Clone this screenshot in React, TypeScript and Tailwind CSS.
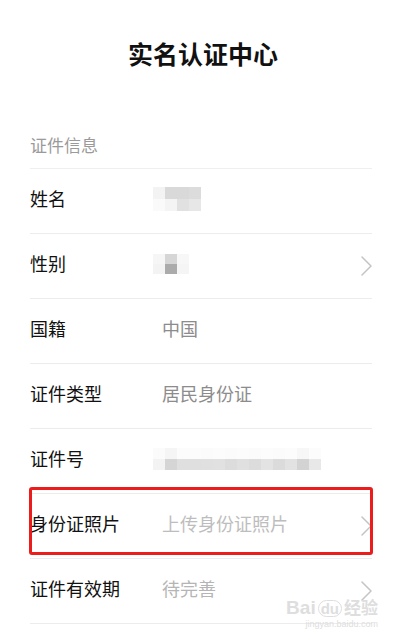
const font = { fontFamily: '"Noto Sans CJK SC", "Noto Sans", sans-serif' };

const Chevron = () => (
  <svg width="11" height="20" viewBox="0 0 11 20" fill="none" className="shrink-0">
    <path d="M1 1l9 9-9 9" stroke="#c4c4c4" strokeWidth="1.5" strokeLinecap="round" strokeLinejoin="round" />
  </svg>
);

// pixelated (mosaic) blocks standing in for the redacted values
const Mosaic = ({ rows, cell }: { rows: string[][]; cell: string }) => (
  <div className="flex flex-col -ml-[9px]">
    {rows.map((r, i) => (
      <div key={i} className="flex">
        {r.map((c, j) => (
          <div key={j} className={cell} style={{ backgroundColor: c }} />
        ))}
      </div>
    ))}
  </div>
);

const nameBlur = [
  ['#f3f3f3', '#d9d9d9', '#d9d9d9', '#dcdcdc'],
  ['#fafafa', '#f4f4f4', '#e1e1e1', '#e7e7e7'],
];
const sexBlur = [
  ['#f6f6f6', '#d6d6d6', '#f7f7f7'],
  ['#f3f3f3', '#ababab', '#f5f5f5'],
];
const idBlur = [
  ['#fbfbfb', '#f5f5f5', '#fcfcfc', '#fcfcfc', '#fbfbfb', '#fcfcfc', '#fbfbfb', '#fcfcfc', '#fbfbfb', '#fcfcfc', '#fbfbfb', '#fcfcfc', '#f7f7f7', '#fcfcfc'],
  ['#f3f3f3', '#d5d5d5', '#dfdfdf', '#dfdfdf', '#e0e0e0', '#e1e1e1', '#dcdcdc', '#e0e0e0', '#dcdcdc', '#e3e3e3', '#dbdbdb', '#e2e2e2', '#d3d3d3', '#e8e8e8'],
];

type Row = {
  label: string;
  value?: string;
  tone?: string;
  blur?: 'name' | 'sex' | 'id';
  arrow?: boolean;
  mark?: boolean;
};

const rows: Row[] = [
  { label: '姓名', blur: 'name' },
  { label: '性别', blur: 'sex', arrow: true },
  { label: '国籍', value: '中国', tone: 'text-[#8c8c8c]' },
  { label: '证件类型', value: '居民身份证', tone: 'text-[#8c8c8c]' },
  { label: '证件号', blur: 'id' },
  { label: '身份证照片', value: '上传身份证照片', tone: 'text-[#bdbdbd]', arrow: true, mark: true },
  { label: '证件有效期', value: '待完善', tone: 'text-[#b5b5b5]', arrow: true },
];

export default function App() {
  return (
    <div className="relative w-[406px] h-[641px] overflow-hidden bg-white" style={font}>
      <div className="h-[106px] flex items-center justify-center">
        <h1 className="text-[25px] leading-[30px] font-bold text-[#111]">实名认证中心</h1>
      </div>

      <div className="pl-[30px] pr-[34px]">
        <div className="h-[63px] pt-[27px] border-b border-[#efefef]">
          <p className="text-[17px] leading-[24px] text-[#9a9a9a]">证件信息</p>
        </div>

        {rows.map((r) => (
          <div key={r.label} className="relative h-[65px] flex items-center border-b border-[#ececec]">
            <span className="w-[132px] shrink-0 text-[18px] leading-[24px] text-[#111] pb-[6px]">{r.label}</span>
            <div className="flex-1 flex items-center pb-[4px]">
              {r.value && <span className={`text-[18px] leading-[24px] pb-[2px] ${r.tone}`}>{r.value}</span>}
              {r.blur === 'name' && <Mosaic rows={nameBlur} cell="w-[12px] h-[12px]" />}
              {r.blur === 'sex' && <Mosaic rows={sexBlur} cell="w-[12px] h-[10px]" />}
              {r.blur === 'id' && <Mosaic rows={idBlur} cell="w-[12px] h-[11px]" />}
            </div>
            {r.arrow && <Chevron />}
            {r.mark && (
              <div className="absolute -left-[1px] -right-[1px] top-[-7px] h-[68px] border-[3px] border-[#ec1c1c] rounded-[3px]" />
            )}
          </div>
        ))}
      </div>

      <div className="absolute right-[28px] bottom-[12px] flex flex-col items-end text-[#dedede] leading-none select-none">
        <div className="flex items-end gap-[2px] text-[19px] font-bold" style={{ fontFamily: '"Liberation Sans", "Noto Sans CJK SC", sans-serif' }}>
          <span>Bai</span>
          <span className="text-[15px] border border-[#dedede] rounded-full px-[2px]">du</span>
          <span className="text-[17px]">经验</span>
        </div>
        <span className="text-[9px] mt-[3px]" style={{ fontFamily: '"Liberation Sans", sans-serif' }}>jingyan.baidu.com</span>
      </div>
    </div>
  );
}
